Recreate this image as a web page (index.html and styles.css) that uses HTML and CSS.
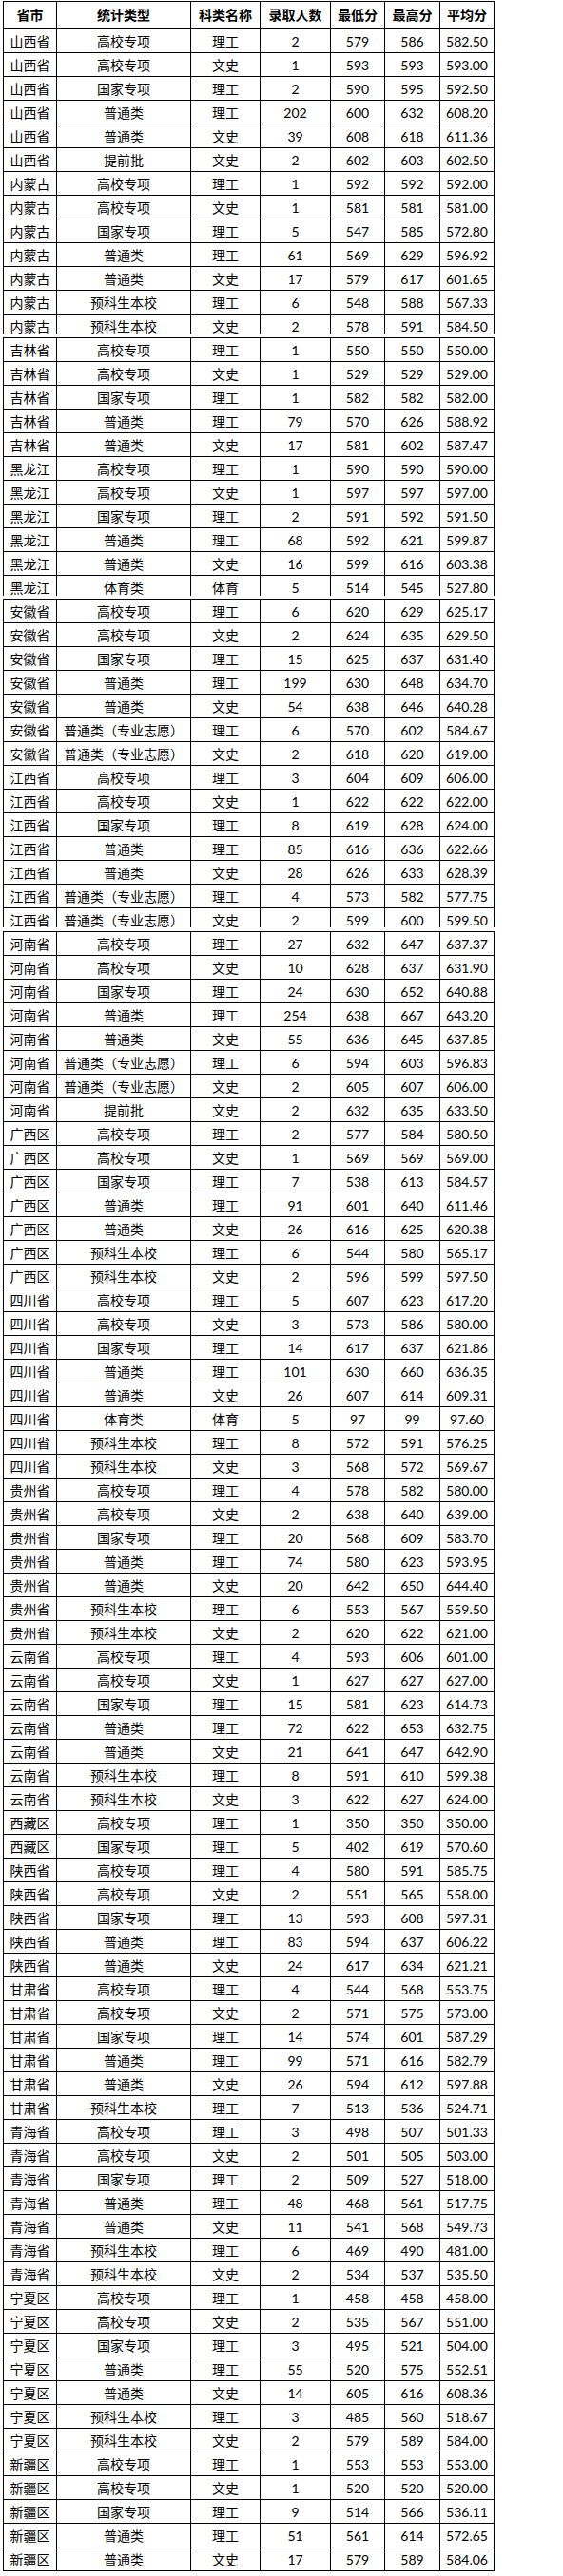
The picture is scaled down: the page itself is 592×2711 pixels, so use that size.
FILE: index.html
```html
<!DOCTYPE html>
<html lang="zh-CN">
<head>
<meta charset="utf-8">
<title>录取分数统计</title>
<link rel="stylesheet" href="styles.css">
</head>
<body>
<div class="sheet">
  <div class="seg">
    <div class="row head"><span>省市</span><span>统计类型</span><span>科类名称</span><span>录取人数</span><span>最低分</span><span>最高分</span><span>平均分</span></div>
    <div class="row first"><span>山西省</span><span>高校专项</span><span>理工</span><span>2</span><span>579</span><span>586</span><span>582.50</span></div>
    <div class="row"><span>山西省</span><span>高校专项</span><span>文史</span><span>1</span><span>593</span><span>593</span><span>593.00</span></div>
    <div class="row"><span>山西省</span><span>国家专项</span><span>理工</span><span>2</span><span>590</span><span>595</span><span>592.50</span></div>
    <div class="row"><span>山西省</span><span>普通类</span><span>理工</span><span>202</span><span>600</span><span>632</span><span>608.20</span></div>
    <div class="row"><span>山西省</span><span>普通类</span><span>文史</span><span>39</span><span>608</span><span>618</span><span>611.36</span></div>
    <div class="row"><span>山西省</span><span>提前批</span><span>文史</span><span>2</span><span>602</span><span>603</span><span>602.50</span></div>
    <div class="row"><span>内蒙古</span><span>高校专项</span><span>理工</span><span>1</span><span>592</span><span>592</span><span>592.00</span></div>
    <div class="row"><span>内蒙古</span><span>高校专项</span><span>文史</span><span>1</span><span>581</span><span>581</span><span>581.00</span></div>
    <div class="row"><span>内蒙古</span><span>国家专项</span><span>理工</span><span>5</span><span>547</span><span>585</span><span>572.80</span></div>
    <div class="row"><span>内蒙古</span><span>普通类</span><span>理工</span><span>61</span><span>569</span><span>629</span><span>596.92</span></div>
    <div class="row"><span>内蒙古</span><span>普通类</span><span>文史</span><span>17</span><span>579</span><span>617</span><span>601.65</span></div>
    <div class="row"><span>内蒙古</span><span>预科生本校</span><span>理工</span><span>6</span><span>548</span><span>588</span><span>567.33</span></div>
    <div class="row cut h20"><span>内蒙古</span><span>预科生本校</span><span>文史</span><span>2</span><span>578</span><span>591</span><span>584.50</span></div>
  </div>

  <div class="seg gap4">
    <div class="row"><span>吉林省</span><span>高校专项</span><span>理工</span><span>1</span><span>550</span><span>550</span><span>550.00</span></div>
    <div class="row"><span>吉林省</span><span>高校专项</span><span>文史</span><span>1</span><span>529</span><span>529</span><span>529.00</span></div>
    <div class="row"><span>吉林省</span><span>国家专项</span><span>理工</span><span>1</span><span>582</span><span>582</span><span>582.00</span></div>
    <div class="row"><span>吉林省</span><span>普通类</span><span>理工</span><span>79</span><span>570</span><span>626</span><span>588.92</span></div>
    <div class="row"><span>吉林省</span><span>普通类</span><span>文史</span><span>17</span><span>581</span><span>602</span><span>587.47</span></div>
    <div class="row"><span>黑龙江</span><span>高校专项</span><span>理工</span><span>1</span><span>590</span><span>590</span><span>590.00</span></div>
    <div class="row"><span>黑龙江</span><span>高校专项</span><span>文史</span><span>1</span><span>597</span><span>597</span><span>597.00</span></div>
    <div class="row"><span>黑龙江</span><span>国家专项</span><span>理工</span><span>2</span><span>591</span><span>592</span><span>591.50</span></div>
    <div class="row"><span>黑龙江</span><span>普通类</span><span>理工</span><span>68</span><span>592</span><span>621</span><span>599.87</span></div>
    <div class="row"><span>黑龙江</span><span>普通类</span><span>文史</span><span>16</span><span>599</span><span>616</span><span>603.38</span></div>
    <div class="row cut h21"><span>黑龙江</span><span>体育类</span><span>体育</span><span>5</span><span>514</span><span>545</span><span>527.80</span></div>
  </div>

  <div class="seg gap3">
    <div class="row"><span>安徽省</span><span>高校专项</span><span>理工</span><span>6</span><span>620</span><span>629</span><span>625.17</span></div>
    <div class="row"><span>安徽省</span><span>高校专项</span><span>文史</span><span>2</span><span>624</span><span>635</span><span>629.50</span></div>
    <div class="row"><span>安徽省</span><span>国家专项</span><span>理工</span><span>15</span><span>625</span><span>637</span><span>631.40</span></div>
    <div class="row"><span>安徽省</span><span>普通类</span><span>理工</span><span>199</span><span>630</span><span>648</span><span>634.70</span></div>
    <div class="row"><span>安徽省</span><span>普通类</span><span>文史</span><span>54</span><span>638</span><span>646</span><span>640.28</span></div>
    <div class="row"><span>安徽省</span><span>普通类（专业志愿）</span><span>理工</span><span>6</span><span>570</span><span>602</span><span>584.67</span></div>
    <div class="row"><span>安徽省</span><span>普通类（专业志愿）</span><span>文史</span><span>2</span><span>618</span><span>620</span><span>619.00</span></div>
    <div class="row"><span>江西省</span><span>高校专项</span><span>理工</span><span>3</span><span>604</span><span>609</span><span>606.00</span></div>
    <div class="row"><span>江西省</span><span>高校专项</span><span>文史</span><span>1</span><span>622</span><span>622</span><span>622.00</span></div>
    <div class="row"><span>江西省</span><span>国家专项</span><span>理工</span><span>8</span><span>619</span><span>628</span><span>624.00</span></div>
    <div class="row"><span>江西省</span><span>普通类</span><span>理工</span><span>85</span><span>616</span><span>636</span><span>622.66</span></div>
    <div class="row"><span>江西省</span><span>普通类</span><span>文史</span><span>28</span><span>626</span><span>633</span><span>628.39</span></div>
    <div class="row"><span>江西省</span><span>普通类（专业志愿）</span><span>理工</span><span>4</span><span>573</span><span>582</span><span>577.75</span></div>
    <div class="row cut h20"><span>江西省</span><span>普通类（专业志愿）</span><span>文史</span><span>2</span><span>599</span><span>600</span><span>599.50</span></div>
  </div>

  <div class="seg gap4">
    <div class="row"><span>河南省</span><span>高校专项</span><span>理工</span><span>27</span><span>632</span><span>647</span><span>637.37</span></div>
    <div class="row"><span>河南省</span><span>高校专项</span><span>文史</span><span>10</span><span>628</span><span>637</span><span>631.90</span></div>
    <div class="row"><span>河南省</span><span>国家专项</span><span>理工</span><span>24</span><span>630</span><span>652</span><span>640.88</span></div>
    <div class="row"><span>河南省</span><span>普通类</span><span>理工</span><span>254</span><span>638</span><span>667</span><span>643.20</span></div>
    <div class="row"><span>河南省</span><span>普通类</span><span>文史</span><span>55</span><span>636</span><span>645</span><span>637.85</span></div>
    <div class="row"><span>河南省</span><span>普通类（专业志愿）</span><span>理工</span><span>6</span><span>594</span><span>603</span><span>596.83</span></div>
    <div class="row"><span>河南省</span><span>普通类（专业志愿）</span><span>文史</span><span>2</span><span>605</span><span>607</span><span>606.00</span></div>
    <div class="row"><span>河南省</span><span>提前批</span><span>文史</span><span>2</span><span>632</span><span>635</span><span>633.50</span></div>
    <div class="row"><span>广西区</span><span>高校专项</span><span>理工</span><span>2</span><span>577</span><span>584</span><span>580.50</span></div>
    <div class="row"><span>广西区</span><span>高校专项</span><span>文史</span><span>1</span><span>569</span><span>569</span><span>569.00</span></div>
    <div class="row"><span>广西区</span><span>国家专项</span><span>理工</span><span>7</span><span>538</span><span>613</span><span>584.57</span></div>
    <div class="row"><span>广西区</span><span>普通类</span><span>理工</span><span>91</span><span>601</span><span>640</span><span>611.46</span></div>
    <div class="row"><span>广西区</span><span>普通类</span><span>文史</span><span>26</span><span>616</span><span>625</span><span>620.38</span></div>
    <div class="row"><span>广西区</span><span>预科生本校</span><span>理工</span><span>6</span><span>544</span><span>580</span><span>565.17</span></div>
    <div class="row"><span>广西区</span><span>预科生本校</span><span>文史</span><span>2</span><span>596</span><span>599</span><span>597.50</span></div>
    <div class="row"><span>四川省</span><span>高校专项</span><span>理工</span><span>5</span><span>607</span><span>623</span><span>617.20</span></div>
    <div class="row"><span>四川省</span><span>高校专项</span><span>文史</span><span>3</span><span>573</span><span>586</span><span>580.00</span></div>
    <div class="row"><span>四川省</span><span>国家专项</span><span>理工</span><span>14</span><span>617</span><span>637</span><span>621.86</span></div>
    <div class="row"><span>四川省</span><span>普通类</span><span>理工</span><span>101</span><span>630</span><span>660</span><span>636.35</span></div>
    <div class="row"><span>四川省</span><span>普通类</span><span>文史</span><span>26</span><span>607</span><span>614</span><span>609.31</span></div>
    <div class="row"><span>四川省</span><span>体育类</span><span>体育</span><span>5</span><span>97</span><span>99</span><span>97.60</span></div>
    <div class="row"><span>四川省</span><span>预科生本校</span><span>理工</span><span>8</span><span>572</span><span>591</span><span>576.25</span></div>
    <div class="row"><span>四川省</span><span>预科生本校</span><span>文史</span><span>3</span><span>568</span><span>572</span><span>569.67</span></div>
    <div class="row"><span>贵州省</span><span>高校专项</span><span>理工</span><span>4</span><span>578</span><span>582</span><span>580.00</span></div>
    <div class="row"><span>贵州省</span><span>高校专项</span><span>文史</span><span>2</span><span>638</span><span>640</span><span>639.00</span></div>
    <div class="row"><span>贵州省</span><span>国家专项</span><span>理工</span><span>20</span><span>568</span><span>609</span><span>583.70</span></div>
    <div class="row"><span>贵州省</span><span>普通类</span><span>理工</span><span>74</span><span>580</span><span>623</span><span>593.95</span></div>
    <div class="row"><span>贵州省</span><span>普通类</span><span>文史</span><span>20</span><span>642</span><span>650</span><span>644.40</span></div>
    <div class="row"><span>贵州省</span><span>预科生本校</span><span>理工</span><span>6</span><span>553</span><span>567</span><span>559.50</span></div>
    <div class="row"><span>贵州省</span><span>预科生本校</span><span>文史</span><span>2</span><span>620</span><span>622</span><span>621.00</span></div>
    <div class="row"><span>云南省</span><span>高校专项</span><span>理工</span><span>4</span><span>593</span><span>606</span><span>601.00</span></div>
    <div class="row"><span>云南省</span><span>高校专项</span><span>文史</span><span>1</span><span>627</span><span>627</span><span>627.00</span></div>
    <div class="row"><span>云南省</span><span>国家专项</span><span>理工</span><span>15</span><span>581</span><span>623</span><span>614.73</span></div>
    <div class="row"><span>云南省</span><span>普通类</span><span>理工</span><span>72</span><span>622</span><span>653</span><span>632.75</span></div>
    <div class="row"><span>云南省</span><span>普通类</span><span>文史</span><span>21</span><span>641</span><span>647</span><span>642.90</span></div>
    <div class="row"><span>云南省</span><span>预科生本校</span><span>理工</span><span>8</span><span>591</span><span>610</span><span>599.38</span></div>
    <div class="row"><span>云南省</span><span>预科生本校</span><span>文史</span><span>3</span><span>622</span><span>627</span><span>624.00</span></div>
    <div class="row"><span>西藏区</span><span>高校专项</span><span>理工</span><span>1</span><span>350</span><span>350</span><span>350.00</span></div>
    <div class="row"><span>西藏区</span><span>国家专项</span><span>理工</span><span>5</span><span>402</span><span>619</span><span>570.60</span></div>
    <div class="row"><span>陕西省</span><span>高校专项</span><span>理工</span><span>4</span><span>580</span><span>591</span><span>585.75</span></div>
    <div class="row"><span>陕西省</span><span>高校专项</span><span>文史</span><span>2</span><span>551</span><span>565</span><span>558.00</span></div>
    <div class="row"><span>陕西省</span><span>国家专项</span><span>理工</span><span>13</span><span>593</span><span>608</span><span>597.31</span></div>
    <div class="row"><span>陕西省</span><span>普通类</span><span>理工</span><span>83</span><span>594</span><span>637</span><span>606.22</span></div>
    <div class="row"><span>陕西省</span><span>普通类</span><span>文史</span><span>24</span><span>617</span><span>634</span><span>621.21</span></div>
    <div class="row"><span>甘肃省</span><span>高校专项</span><span>理工</span><span>4</span><span>544</span><span>568</span><span>553.75</span></div>
    <div class="row"><span>甘肃省</span><span>高校专项</span><span>文史</span><span>2</span><span>571</span><span>575</span><span>573.00</span></div>
    <div class="row"><span>甘肃省</span><span>国家专项</span><span>理工</span><span>14</span><span>574</span><span>601</span><span>587.29</span></div>
    <div class="row"><span>甘肃省</span><span>普通类</span><span>理工</span><span>99</span><span>571</span><span>616</span><span>582.79</span></div>
    <div class="row"><span>甘肃省</span><span>普通类</span><span>文史</span><span>26</span><span>594</span><span>612</span><span>597.88</span></div>
    <div class="row"><span>甘肃省</span><span>预科生本校</span><span>理工</span><span>7</span><span>513</span><span>536</span><span>524.71</span></div>
    <div class="row"><span>青海省</span><span>高校专项</span><span>理工</span><span>3</span><span>498</span><span>507</span><span>501.33</span></div>
    <div class="row"><span>青海省</span><span>高校专项</span><span>文史</span><span>2</span><span>501</span><span>505</span><span>503.00</span></div>
    <div class="row"><span>青海省</span><span>国家专项</span><span>理工</span><span>2</span><span>509</span><span>527</span><span>518.00</span></div>
    <div class="row"><span>青海省</span><span>普通类</span><span>理工</span><span>48</span><span>468</span><span>561</span><span>517.75</span></div>
    <div class="row"><span>青海省</span><span>普通类</span><span>文史</span><span>11</span><span>541</span><span>568</span><span>549.73</span></div>
    <div class="row"><span>青海省</span><span>预科生本校</span><span>理工</span><span>6</span><span>469</span><span>490</span><span>481.00</span></div>
    <div class="row"><span>青海省</span><span>预科生本校</span><span>文史</span><span>2</span><span>534</span><span>537</span><span>535.50</span></div>
    <div class="row"><span>宁夏区</span><span>高校专项</span><span>理工</span><span>1</span><span>458</span><span>458</span><span>458.00</span></div>
    <div class="row"><span>宁夏区</span><span>高校专项</span><span>文史</span><span>2</span><span>535</span><span>567</span><span>551.00</span></div>
    <div class="row"><span>宁夏区</span><span>国家专项</span><span>理工</span><span>3</span><span>495</span><span>521</span><span>504.00</span></div>
    <div class="row"><span>宁夏区</span><span>普通类</span><span>理工</span><span>55</span><span>520</span><span>575</span><span>552.51</span></div>
    <div class="row"><span>宁夏区</span><span>普通类</span><span>文史</span><span>14</span><span>605</span><span>616</span><span>608.36</span></div>
    <div class="row"><span>宁夏区</span><span>预科生本校</span><span>理工</span><span>3</span><span>485</span><span>560</span><span>518.67</span></div>
    <div class="row"><span>宁夏区</span><span>预科生本校</span><span>文史</span><span>2</span><span>579</span><span>589</span><span>584.00</span></div>
    <div class="row"><span>新疆区</span><span>高校专项</span><span>理工</span><span>1</span><span>553</span><span>553</span><span>553.00</span></div>
    <div class="row"><span>新疆区</span><span>高校专项</span><span>文史</span><span>1</span><span>520</span><span>520</span><span>520.00</span></div>
    <div class="row"><span>新疆区</span><span>国家专项</span><span>理工</span><span>9</span><span>514</span><span>566</span><span>536.11</span></div>
    <div class="row"><span>新疆区</span><span>普通类</span><span>理工</span><span>51</span><span>561</span><span>614</span><span>572.65</span></div>
    <div class="row"><span>新疆区</span><span>普通类</span><span>文史</span><span>17</span><span>579</span><span>589</span><span>584.06</span></div>
  </div>
</div>
</body>
</html>
```

FILE: styles.css
```css
html, body {
  margin: 0;
  padding: 0;
  background: #ffffff;
}

body {
  font-family: Lato, "Noto Sans CJK SC", sans-serif;
  font-size: 14px;
  color: #000000;
}

.sheet {
  padding: 1px 0 0 3px;
}

.seg {
  width: 517px;
  box-sizing: border-box;
  border-left: 1px solid #000;
  border-top: 1px solid #000;
}

.gap3 { margin-top: 3px; }
.gap4 { margin-top: 4px; }

.row {
  display: grid;
  grid-template-columns: 56px 141px 73px 74px 57px 58px 57px;
  height: 25px;
}

.row > span {
  box-sizing: border-box;
  border-right: 1px solid #000;
  border-bottom: 1px solid #000;
  text-align: center;
  white-space: nowrap;
  overflow: hidden;
  line-height: 22px;
  padding-top: 2px;
}

.head {
  height: 28px;
}

.head > span {
  font-weight: bold;
  line-height: 27px;
  padding-top: 0;
}

.first {
  height: 26px;
}

.first > span {
  padding-top: 3px;
}

.cut > span {
  border-bottom: none;
}

.h20 { height: 20px; }
.h21 { height: 21px; }
```
